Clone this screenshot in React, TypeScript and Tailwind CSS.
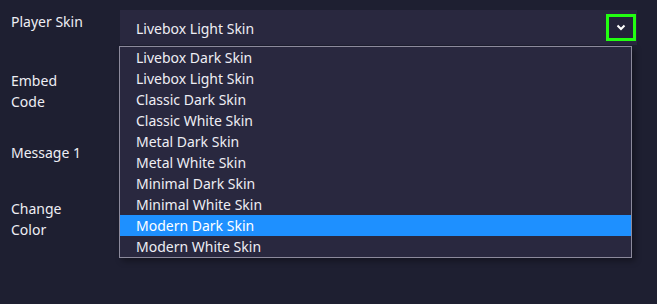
const skins = [
  "Livebox Dark Skin",
  "Livebox Light Skin",
  "Classic Dark Skin",
  "Classic White Skin",
  "Metal Dark Skin",
  "Metal White Skin",
  "Minimal Dark Skin",
  "Minimal White Skin",
  "Modern Dark Skin",
  "Modern White Skin",
];

export default function App() {
  const selected = "Modern Dark Skin";

  return (
    <div className="h-[304px] w-[657px] overflow-hidden bg-[#1e1f31] text-[14px] leading-[21px] text-[#eeeef4] [font-family:'Noto_Sans','Open_Sans',sans-serif]">
      <div className="flex pt-[10px]">
        <div className="flex w-[120px] shrink-0 flex-col pl-[11px]">
          <div className="h-[48px] pt-[1px]">Player Skin</div>
          <div className="h-[60px] pt-[12px]">
            Embed
            <br />
            Code
          </div>
          <div className="h-[52px] pt-[24px]">Message 1</div>
          <div className="pt-[28px]">
            Change
            <br />
            Color
          </div>
        </div>

        <div className="relative w-[517px]">
          <div className="flex h-[35px] w-[517px] items-center bg-[#29283f] pl-[16px] pr-[1px]">
            <span className="flex-1 pt-[2px]">Livebox Light Skin</span>
            <span className="flex h-[27px] w-[30px] items-center justify-center border-[3px] border-[#22ff11] bg-[#24243a]">
              <svg width="10" height="7" viewBox="0 0 10 7" fill="none">
                <path d="M1.5 1.5 5 5 8.5 1.5" stroke="#ffffff" strokeWidth="2" />
              </svg>
            </span>
          </div>

          <ul className="absolute left-[-1px] top-[36px] w-[513px] border border-[#8c8a9c] bg-[#29283f] shadow-[3px_3px_6px_rgba(0,0,0,0.35)]">
            {skins.map((s) => (
              <li
                key={s}
                className={`h-[21px] pl-[16px] ${s === selected ? "bg-[#1e90ff] text-white" : ""}`}
              >
                {s}
              </li>
            ))}
          </ul>
        </div>
      </div>
    </div>
  );
}
